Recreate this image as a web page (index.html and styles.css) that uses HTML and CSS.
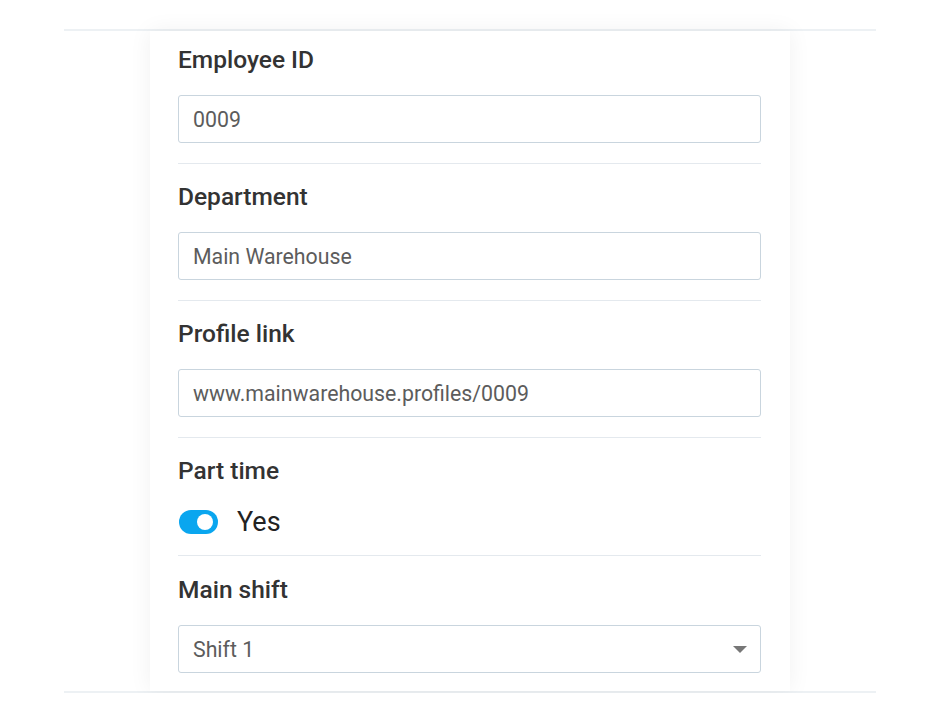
FILE: index.html
```html
<!DOCTYPE html>
<html lang="en">
<head>
    <meta charset="UTF-8">
    <meta name="viewport" content="width=device-width, initial-scale=1.0">
    <title>Employee profile</title>
    <link rel="stylesheet" href="styles.css">
</head>
<body>
    <div class="frame">
        <div class="panel">
            <div class="field first">
                <label class="field-label" for="employeeId">Employee ID</label>
                <input class="field-input" type="text" id="employeeId" value="0009">
            </div>
            <div class="field">
                <label class="field-label" for="department">Department</label>
                <input class="field-input" type="text" id="department" value="Main Warehouse">
            </div>
            <div class="field">
                <label class="field-label" for="profileLink">Profile link</label>
                <input class="field-input" type="text" id="profileLink" value="www.mainwarehouse.profiles/0009">
            </div>
            <div class="field toggle-field">
                <div class="field-label">Part time</div>
                <div class="toggle-row">
                    <span class="toggle on"><span class="knob"></span></span>
                    <span class="toggle-text">Yes</span>
                </div>
            </div>
            <div class="field last">
                <label class="field-label" for="mainShift">Main shift</label>
                <div class="select-wrap">
                    <select class="field-input select" id="mainShift">
                        <option>Shift 1</option>
                        <option>Shift 2</option>
                        <option>Shift 3</option>
                    </select>
                    <svg class="caret" width="14" height="7" viewBox="0 0 14 7"><path d="M0 0 H14 L7 7 Z" fill="#777"/></svg>
                </div>
            </div>
        </div>
    </div>
</body>
</html>
```
FILE: styles.css
```css
body{
    margin: 0;
    background: #fff;
    font-family: Roboto, "Liberation Sans", sans-serif;
    color: #333;
}

.frame{
    margin: 29px 64px 0 64px;
    border-top: 2px solid #edf1f4;
    border-bottom: 2px solid #edf1f4;
}

.panel{
    width: 640px;
    margin-left: 86px;
    box-sizing: border-box;
    padding: 0 29px 0 28px;
    background: #fff;
    box-shadow: 0 0 22px rgba(0,0,0,0.06);
}

.field{
    padding: 19px 0 20px 0;
    border-bottom: 1px solid #e4e9ee;
}
.field.first{
    padding-top: 15px;
}
.field.last{
    border-bottom: none;
    padding-top: 20px;
    padding-bottom: 18px;
}

.field-label{
    display: block;
    font-size: 24.5px;
    line-height: 28px;
    font-weight: 500;
    color: #333;
    margin-bottom: 21px;
}

.field-input{
    display: block;
    width: 100%;
    height: 48px;
    box-sizing: border-box;
    border: 1px solid #c9d5de;
    border-radius: 3px;
    padding: 1px 14px 0 14px;
    font-family: Roboto, "Liberation Sans", sans-serif;
    font-size: 21.3px;
    color: #5c5c5c;
    background: #fff;
    outline: none;
}

.select-wrap{
    position: relative;
}
.select{
    appearance: none;
    -webkit-appearance: none;
}
.caret{
    position: absolute;
    right: 14px;
    top: 21px;
    pointer-events: none;
}

.toggle-field{
    padding-bottom: 21px;
}
.toggle-field .field-label{
    margin-bottom: 25px;
}
.toggle-row{
    display: flex;
    align-items: center;
    height: 24px;
}
.toggle{
    position: relative;
    width: 39px;
    height: 24px;
    margin-left: 1px;
    border-radius: 12px;
    background: #0aa6ef;
}
.knob{
    position: absolute;
    top: 4px;
    right: 5px;
    width: 16px;
    height: 16px;
    border-radius: 50%;
    background: #fff;
}
.toggle-text{
    margin-left: 19px;
    font-size: 27px;
    color: #222;
}
```
